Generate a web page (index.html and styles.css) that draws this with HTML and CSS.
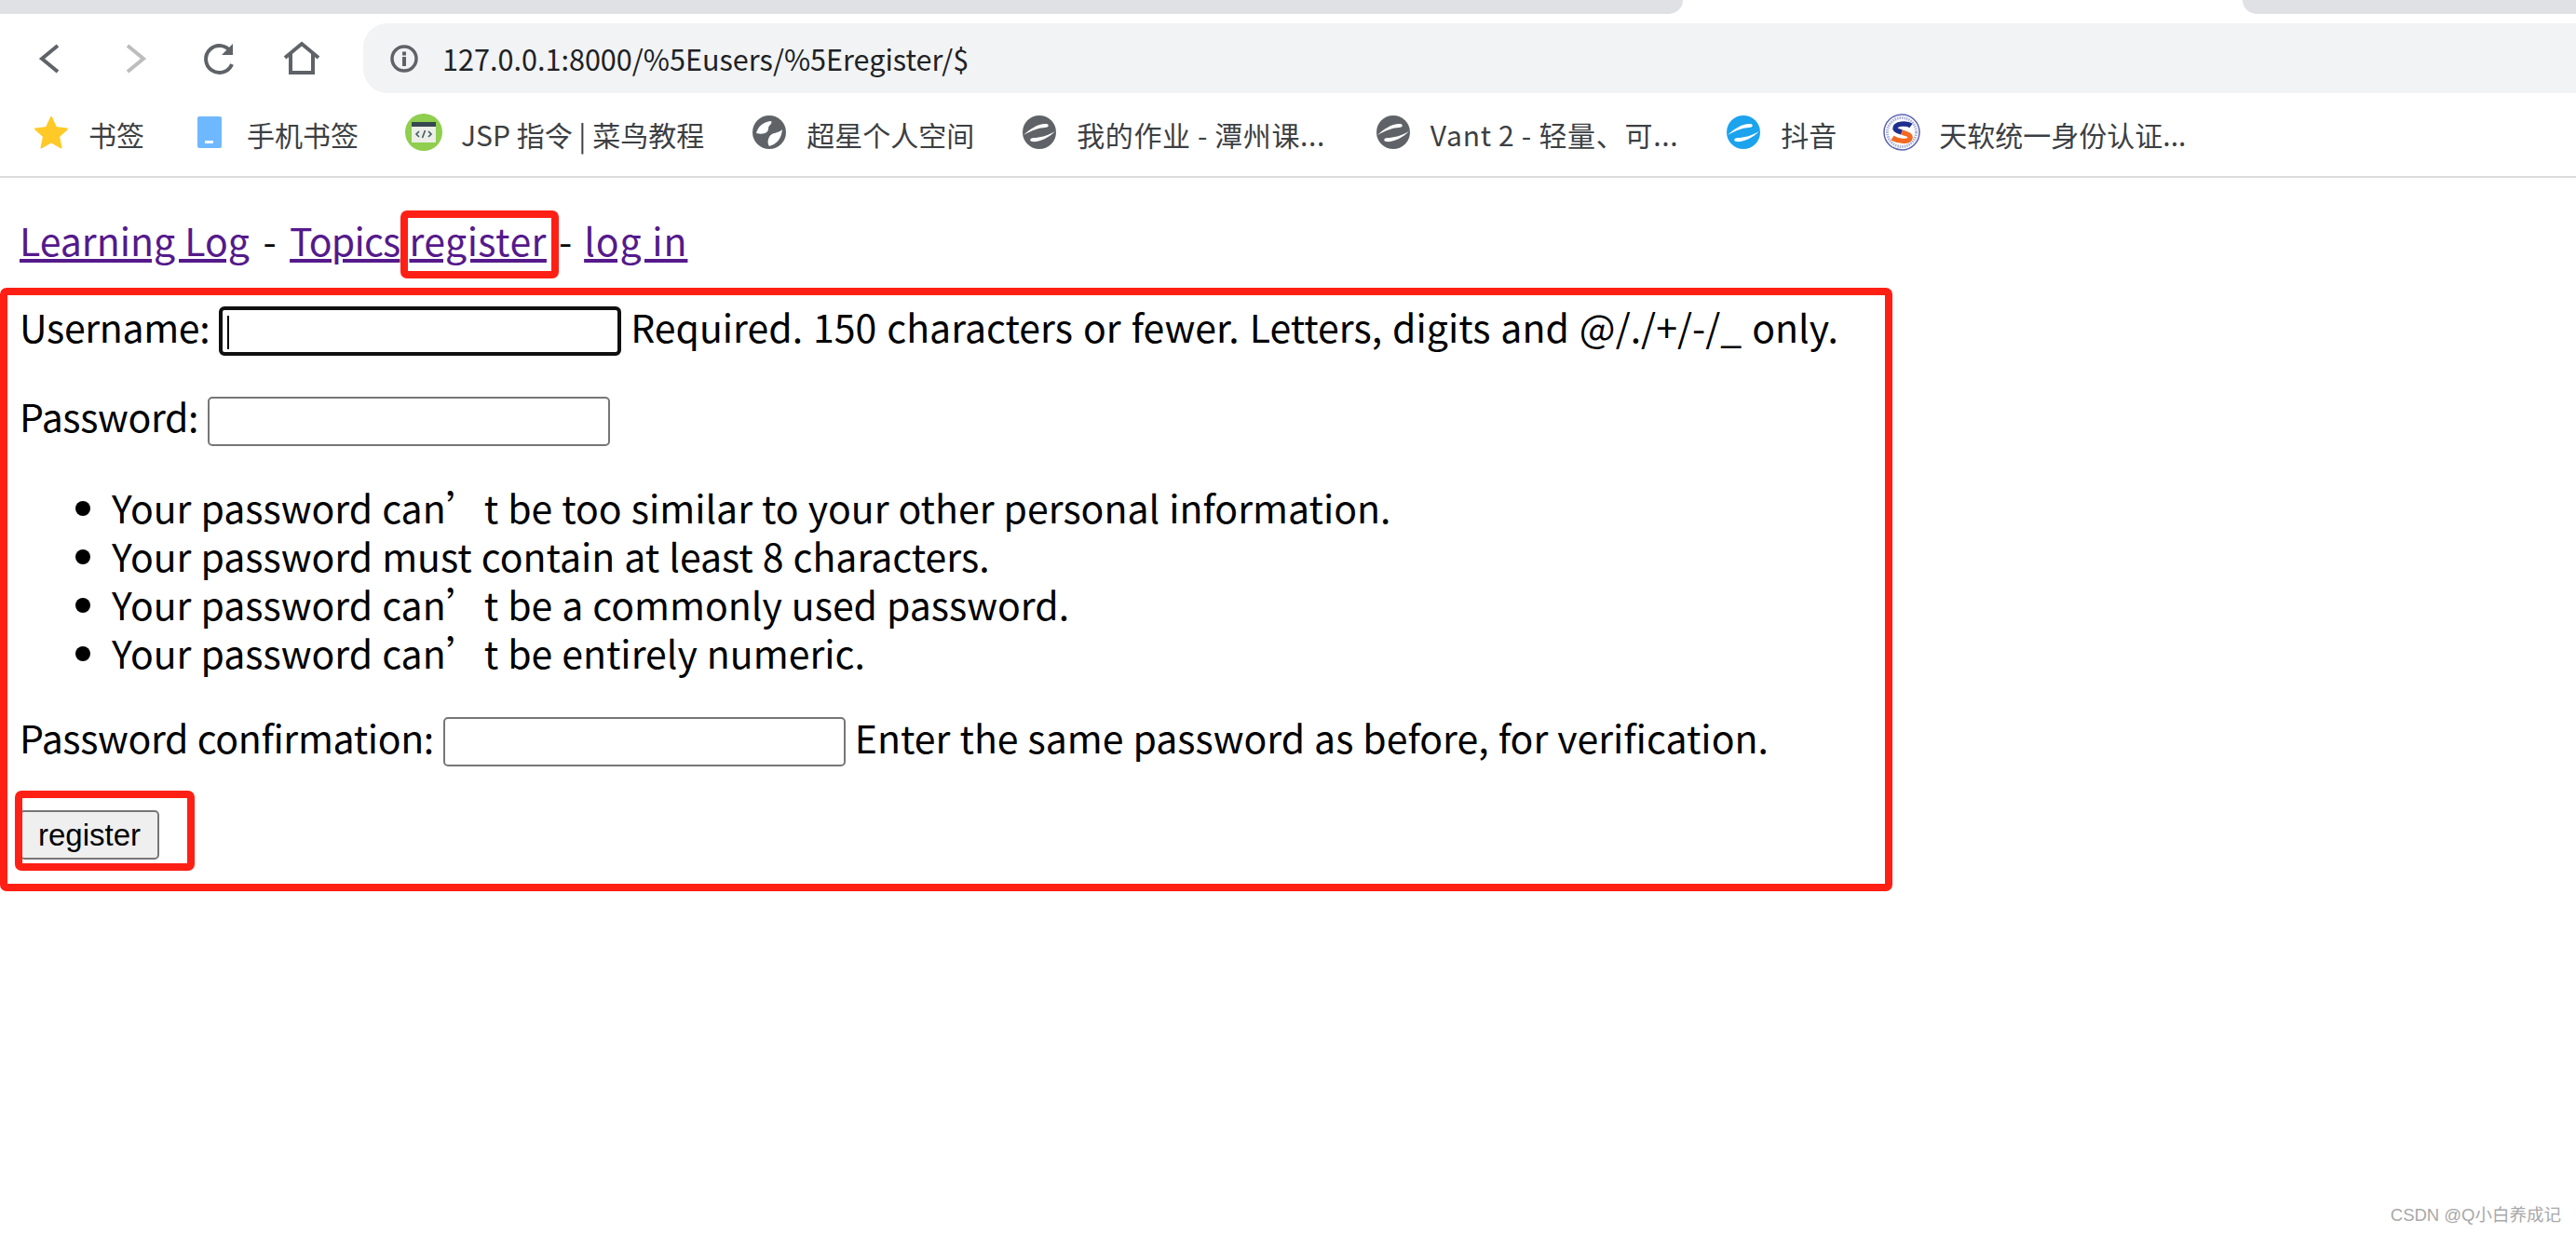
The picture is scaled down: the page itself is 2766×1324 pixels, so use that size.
FILE: index.html
```html
<!DOCTYPE html>
<html lang="zh-CN">
<head>
<meta charset="utf-8">
<title>register</title>
<link rel="stylesheet" href="styles.css">
</head>
<body>
<header class="chrome">
  <div class="tabs"><div class="tab tab-left"></div><div class="tab-active"></div><div class="tab tab-right"></div></div>
  <div class="toolbar">
    <svg class="nav nav-back" viewBox="0 0 40 40"><path d="M26 6 9 20l17 14" /></svg>
    <svg class="nav nav-fwd" viewBox="0 0 40 40"><path d="M14 6l17 14-17 14" /></svg>
    <svg class="nav nav-reload" viewBox="0 0 40 40"><path d="M33 26a14.500 14.500 0 1 1-1-13" /><path class="fill" d="M34 4v12H22z" /></svg>
    <svg class="nav nav-home" viewBox="0 0 40 40"><path d="M2 19 20 4l18 15" /><path d="M8 15v20h24V15" /></svg>
    <div class="omnibox">
      <svg class="info" viewBox="0 0 30 30"><circle cx="15" cy="15" r="13" /><rect class="info-dot" x="13" y="7.500" width="4" height="4" /><rect class="info-dot" x="13" y="13" width="4" height="10" /></svg>
      <span class="url">127.0.0.1:8000/%5Eusers/%5Eregister/$</span>
    </div>
  </div>
  <nav class="bookmarks">
    <a class="bm"><span class="bm-icon"><svg viewBox="0 0 40 40"><path fill="#ffca28" stroke="#ffca28" stroke-width="2" stroke-linejoin="round" d="M20 4l5 11 12 1.500-9 8 2.500 12L20 30.500 9.500 36.500 12 24.500l-9-8L15 15z" /></svg></span>书签</a>
    <a class="bm"><span class="bm-icon"><svg viewBox="0 0 40 40"><rect x="7" y="3" width="26" height="34" rx="2" fill="#6fb8ff" /><rect x="15" y="29" width="9" height="3" fill="#fff" /></svg></span>手机书签</a>
    <a class="bm"><span class="bm-icon"><svg viewBox="0 0 40 40"><circle cx="20" cy="20" r="20" fill="#8fce4e" /><rect x="7" y="9" width="26" height="5" fill="#37474f" /><rect x="7" y="14" width="26" height="17" fill="#eceee8" /><path d="M15 19l-3 3 3 3M25 19l3 3-3 3M21.500 18l-3 8" fill="none" stroke="#455a64" stroke-width="1.600" /></svg></span>JSP 指令 | 菜鸟教程</a>
    <a class="bm"><span class="bm-icon"><svg viewBox="0 0 40 40"><circle cx="20" cy="20" r="18" fill="#5f6368" /><path fill="#fff" d="M6 21C8 14 13 9 22 8c2 3-3 4-3 8s-4 7-13 5zM34 17c-3 4-12 3-14 8-2 4-2 7 0 10 7-2 13-7 14-18z" /></svg></span>超星个人空间</a>
    <a class="bm"><span class="bm-icon"><svg viewBox="0 0 40 40"><circle cx="20" cy="20" r="18" fill="#5f6368" /><path fill="#fff" d="M3 23c7-7 17-13 25-12 3 1 2 4-2 4-6 0-14 3-23 8zM37 19c-7 7-17 12-25 11-3-1-2-4 2-4 6 0 14-2 23-7z" /></svg></span><span class="bm-text-a">我的作业 - 潭州课...</span></a>
    <a class="bm bm-vant"><span class="bm-icon"><svg viewBox="0 0 40 40"><circle cx="20" cy="20" r="18" fill="#5f6368" /><path fill="#fff" d="M3 23c7-7 17-13 25-12 3 1 2 4-2 4-6 0-14 3-23 8zM37 19c-7 7-17 12-25 11-3-1-2-4 2-4 6 0 14-2 23-7z" /></svg></span><span class="bm-text-b">Vant 2 - 轻量、可...</span></a>
    <a class="bm"><span class="bm-icon"><svg viewBox="0 0 40 40"><circle cx="20" cy="20" r="18" fill="#1ba3ee" /><path fill="#fff" d="M3 23c7-7 17-13 25-12 3 1 2 4-2 4-6 0-14 3-23 8zM37 19c-7 7-17 12-25 11-3-1-2-4 2-4 6 0 14-2 23-7z" /></svg></span>抖音</a>
    <a class="bm"><span class="bm-icon"><svg viewBox="0 0 40 40"><circle cx="20" cy="20" r="19" fill="#fff" stroke="#5a63b0" stroke-width="1.500" /><circle cx="20" cy="20" r="15.500" fill="none" stroke="#a9aed8" stroke-width="3" stroke-dasharray="1.500 1" /><path fill="none" stroke="#1f2f8f" stroke-width="5.500" d="M30 13c-4-3-17-3-17 3 0 2 4 3 7 4" /><path fill="none" stroke="#f26a21" stroke-width="5.500" d="M20 20c3 1 10 2 9 6-1 5-13 4-19 0" /></svg></span>天软统一身份认证...</a>
  </nav>
</header>
<main class="page">
  <p class="nav-line"><a class="lnk" href="#">Learning Log</a> <span class="sep sep-a">-</span> <a class="lnk lnk-topics" href="#">Topics</a> <a class="lnk lnk-register" href="#">register</a> <span class="sep sep-b">-</span> <a class="lnk lnk-login" href="#">log in</a></p>
  <form class="form">
    <p class="row row-user"><span class="lbl">Username:</span> <span class="field field-focus"><i class="caret"></i></span> <span class="hint">Required. 150 characters or fewer. Letters, digits and @/./+/-/_ only.</span></p>
    <p class="row row-pass"><span class="lbl">Password:</span> <span class="field"></span></p>
    <ul class="rules">
      <li>Your password can’t be too similar to your other personal information.</li>
      <li>Your password must contain at least 8 characters.</li>
      <li>Your password can’t be a commonly used password.</li>
      <li>Your password can’t be entirely numeric.</li>
    </ul>
    <p class="row row-confirm"><span class="lbl">Password confirmation:</span> <span class="field"></span> Enter the same password as before, for verification.</p>
    <button class="submit" type="button">register</button>
  </form>
</main>
<div class="mark mark-nav"></div>
<div class="mark mark-form"></div>
<div class="mark mark-btn"></div>
<div class="watermark">CSDN @Q小白养成记</div>
</body>
</html>
```
FILE: styles.css
```css
* { box-sizing: border-box; }
html, body { margin: 0; height: 1324px; overflow: hidden; background: #fff; }
body { font-family: "Noto Sans CJK SC", "Noto Sans", sans-serif; color: #000; position: relative; }

.chrome { height: 191px; border-bottom: 2px solid #dcdcdc; }
.tabs { display: flex; height: 15px; background: #fff; }
.tab { background: #dfe1e5; }
.tab-left { width: 1807px; border-bottom-right-radius: 18px; }
.tab-active { width: 601px; }
.tab-right { flex: 1; border-bottom-left-radius: 18px; }

.toolbar { display: flex; align-items: center; height: 85px; padding-top: 10px; }
.nav { width: 40px; height: 40px; fill: none; stroke: #5f6368; stroke-width: 4; flex: none; }
.nav .fill { fill: #5f6368; stroke: none; }
.nav-back { margin-left: 36px; }
.nav-fwd { margin-left: 47px; stroke: #bdbdbd; }
.nav-reload { margin-left: 53px; }
.nav-home { margin-left: 48px; }
.omnibox { flex: 1; margin-left: 46px; height: 75px; background: #f1f3f4; border-radius: 26px 0 0 26px; display: flex; align-items: center; padding-left: 29px; }
.info { width: 30px; height: 30px; fill: none; stroke: #5f6368; stroke-width: 3.500; }
.info-dot { fill: #5f6368; stroke: none; }
.url { margin-left: 26px; font-size: 30.600px; color: #202124; white-space: nowrap; }

.bookmarks { display: flex; align-items: center; height: 89px; padding: 0 0 1px 35px; gap: 50px; font-size: 30px; color: #3c4043; }
.bm { display: flex; align-items: center; gap: 20px; white-space: nowrap; }
.bm-vant { margin-left: 3px; }
.bm-text-a { letter-spacing: 0.6px; }
.bm-text-b { letter-spacing: 0.7px; }
.bm-icon { width: 40px; height: 40px; display: block; margin-top: -5px; }
.bm-icon svg { display: block; width: 40px; height: 40px; }

.page { padding: 0 0 0 21px; font-size: 41px; line-height: 52px; word-spacing: 0.8px; }
.nav-line { margin: 40px 0 0; }
.lnk { color: #551a8b; }
.lnk-topics { letter-spacing: -0.8px; }
.lnk-register { letter-spacing: 0.45px; }
.lnk-login { letter-spacing: 0.9px; }
.sep-a { margin: 0 4.500px; }
.sep-b { margin: 0 3px; }
.form { display: block; }
.row { margin: 0; white-space: nowrap; }
.lbl { letter-spacing: -0.35px; }
.hint { word-spacing: 1.800px; }
.row-user { margin-top: 41px; }
.row-pass { margin-top: 36px; }
.row-confirm { margin-top: 39px; }
.field { display: inline-block; width: 432px; height: 53px; margin-bottom: 2px; border: 2px solid #767676; border-radius: 5px; background: #fff; vertical-align: middle; position: relative; }
.field-focus { border: 4px solid #101010; border-radius: 6px; }
.caret { position: absolute; left: 5px; top: 6px; width: 2px; height: 36px; background: #000; }
.rules { margin: 37px 0 0; padding: 0 0 0 99px; }
.submit { display: block; margin: 45px 0 0; width: 150px; height: 53px; padding: 0; font: 33px "Liberation Sans", Arial, sans-serif; color: #000; background: #efefef; border: 2px solid #767676; border-radius: 5px; }

.mark { position: absolute; border: 8px solid #ff2015; border-radius: 7px; }
.mark-nav { left: 430px; top: 226px; width: 170px; height: 73px; }
.mark-form { left: 0; top: 309px; width: 2032px; height: 648px; }
.mark-btn { left: 16px; top: 849px; width: 193px; height: 86px; }

.watermark { position: absolute; right: 16px; top: 1293px; font: 18.500px/24px "Liberation Sans", "Noto Sans CJK SC", sans-serif; color: #a8a8a8; }
```
